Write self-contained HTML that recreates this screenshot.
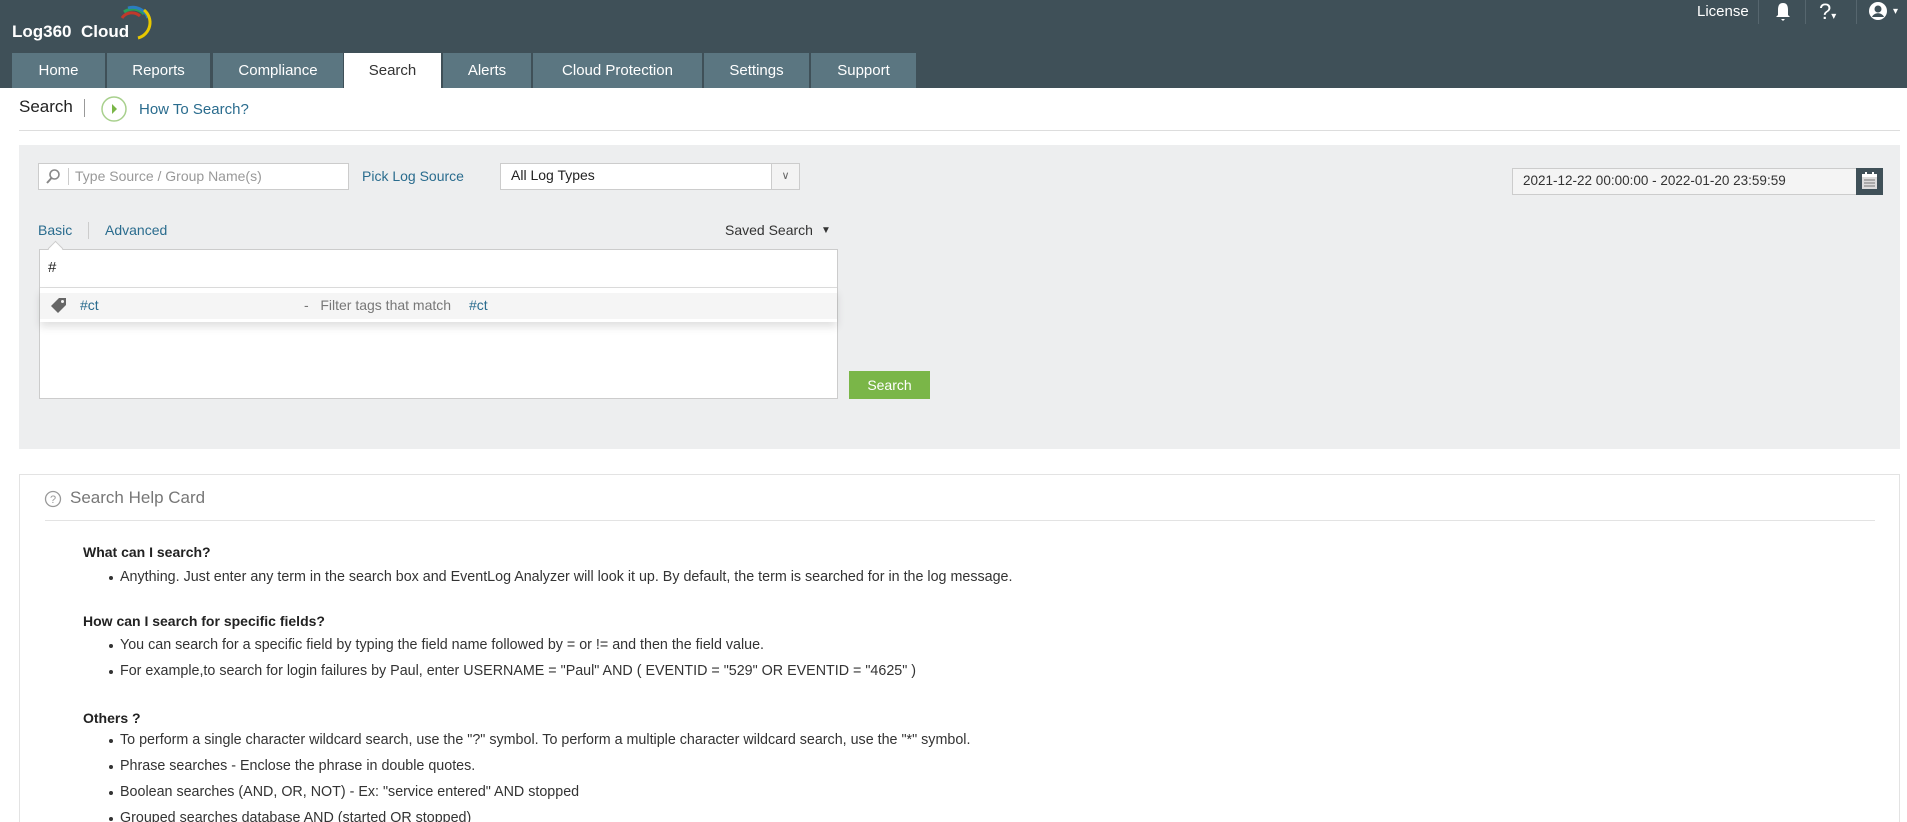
<!DOCTYPE html>
<html><head><meta charset="utf-8"><style>
*{margin:0;padding:0;box-sizing:border-box}
html,body{width:1907px;height:822px;overflow:hidden}
body{background:#fff;font-family:"Liberation Sans",sans-serif;position:relative;color:#333}
.a{position:absolute;white-space:nowrap}
#hdr{left:0;top:0;width:1907px;height:88px;background:#3f5058}
.tab{position:absolute;top:53px;height:35px;background:#5b7681;color:#fff;font-size:15px;text-align:center;line-height:35px}
.tab.on{background:#fff;color:#333}
.lnk{color:#2a6c8e}
.bul{font-size:14.3px;color:#333}
.bul:before{content:"";position:absolute;left:-11px;top:7px;width:4px;height:4px;border-radius:50%;background:#333}
h4{font-size:14px;font-weight:bold;color:#222}
</style></head><body>
<div id="hdr" class="a"></div>
<div class="a" style="left:12px;top:22px;color:#fff;font-size:17px;font-weight:bold">Log360&nbsp;&nbsp;Cloud</div>
<svg class="a" style="left:114px;top:4px" width="40" height="38" viewBox="0 0 40 38"><path d="M8 14 A12 12 0 0 1 26 12" stroke="#c0392b" stroke-width="3" fill="none"/><path d="M10 8 A15 15 0 0 1 30 10" stroke="#2a9d5c" stroke-width="3" fill="none"/><path d="M14 4 A16 16 0 0 1 34 14" stroke="#2a7dc0" stroke-width="3" fill="none"/><path d="M30 6 A16 16 0 0 1 24 34" stroke="#e8c800" stroke-width="3" fill="none"/></svg>
<div class="tab" style="left:12px;width:93px">Home</div>
<div class="tab" style="left:107px;width:103px">Reports</div>
<div class="tab" style="left:213px;width:130px">Compliance</div>
<div class="tab on" style="left:344px;width:97px">Search</div>
<div class="tab" style="left:443px;width:88px">Alerts</div>
<div class="tab" style="left:533px;width:169px">Cloud Protection</div>
<div class="tab" style="left:704px;width:105px">Settings</div>
<div class="tab" style="left:811px;width:105px">Support</div>
<div class="a" style="left:1697px;top:3px;color:#fff;font-size:15px">License</div>
<div class="a" style="left:1758px;top:0;width:1px;height:24px;background:#56666e"></div>
<svg class="a" style="left:1775px;top:2px" width="16" height="20" viewBox="0 0 16 20"><path d="M8 1 C4 1 3 4 3 8 L3 13 L1 15 L15 15 L13 13 L13 8 C13 4 12 1 8 1Z M6 17 L10 17 L8 19Z" fill="#fff"/></svg>
<div class="a" style="left:1805px;top:0;width:1px;height:24px;background:#56666e"></div>
<div class="a" style="left:1819px;top:-1px;color:#fff;font-size:22px">?<span style="font-size:10px">▾</span></div>
<div class="a" style="left:1856px;top:0;width:1px;height:24px;background:#56666e"></div>
<svg class="a" style="left:1868px;top:1px" width="20" height="20" viewBox="0 0 20 20"><circle cx="10" cy="10" r="9" fill="#fff"/><circle cx="10" cy="8" r="3.5" fill="#3f5058"/><path d="M4 16 C6 11 14 11 16 16Z" fill="#3f5058"/></svg>
<div class="a" style="left:1893px;top:6px;color:#fff;font-size:10px">▾</div>

<div class="a" style="left:19px;top:97px;font-size:17px;color:#222">Search</div>
<div class="a" style="left:84px;top:99px;width:1px;height:18px;background:#999"></div>
<svg class="a" style="left:100px;top:95px" width="28" height="28" viewBox="0 0 28 28"><circle cx="14" cy="14" r="12" fill="none" stroke="#a8d08d" stroke-width="1.5"/><path d="M12 9 L17 14 L12 19Z" fill="#7ab648"/></svg>
<div class="a lnk" style="left:139px;top:101px;font-size:15px">How To Search?</div>
<div class="a" style="left:19px;top:130px;width:1881px;height:1px;background:#ddd"></div>

<div class="a" style="left:19px;top:145px;width:1881px;height:304px;background:#edeeef"></div>
<div class="a" style="left:38px;top:163px;width:311px;height:27px;background:#fff;border:1px solid #ccc"></div>
<svg class="a" style="left:45px;top:168px" width="16" height="17" viewBox="0 0 16 17"><circle cx="9.5" cy="6.5" r="4.5" fill="none" stroke="#888" stroke-width="1.6"/><path d="M6.5 10 L2 15" stroke="#888" stroke-width="2"/></svg>
<div class="a" style="left:68px;top:168px;width:1px;height:17px;background:#ccc"></div>
<div class="a" style="left:75px;top:168px;font-size:14px;color:#999">Type Source / Group Name(s)</div>
<div class="a lnk" style="left:362px;top:168px;font-size:14px">Pick Log Source</div>
<div class="a" style="left:500px;top:163px;width:300px;height:27px;background:#fff;border:1px solid #ccc"></div>
<div class="a" style="left:771px;top:164px;width:28px;height:25px;background:#f3f3f3;border-left:1px solid #ccc;color:#666;font-size:11px;text-align:center;line-height:25px">&#x2228;</div>
<div class="a" style="left:511px;top:167px;font-size:14px;color:#222">All Log Types</div>
<div class="a" style="left:1512px;top:168px;width:345px;height:27px;background:#f4f4f4;border:1px solid #ccc"></div>
<div class="a" style="left:1523px;top:173px;font-size:13.5px;color:#333">2021-12-22 00:00:00 - 2022-01-20 23:59:59</div>
<div class="a" style="left:1856px;top:168px;width:27px;height:27px;background:#3f5058"></div>
<svg class="a" style="left:1861px;top:171px" width="17" height="19" viewBox="0 0 17 19"><rect x="1" y="3" width="15" height="15" fill="#ddd"/><rect x="1" y="3" width="15" height="3" fill="#fff"/><rect x="4" y="1" width="2" height="4" fill="#fff"/><rect x="11" y="1" width="2" height="4" fill="#fff"/><path d="M3 9h11M3 12h11M3 15h11" stroke="#777" stroke-width="1"/></svg>

<div class="a lnk" style="left:38px;top:222px;font-size:14px">Basic</div>
<div class="a" style="left:88px;top:222px;width:1px;height:17px;background:#ccc"></div>
<div class="a lnk" style="left:105px;top:222px;font-size:14px">Advanced</div>
<div class="a" style="left:725px;top:222px;font-size:14px;color:#333">Saved Search</div>
<div class="a" style="left:821px;top:225px;font-size:10px;color:#333">▼</div>
<div class="a" style="left:39px;top:249px;width:799px;height:150px;background:#fff;border:1px solid #ccc"></div>
<div class="a" style="left:50px;top:243px;width:11px;height:11px;background:#fff;border-left:1px solid #ccc;border-top:1px solid #ccc;transform:rotate(45deg)"></div>
<div class="a" style="left:48px;top:259px;font-size:15px;color:#222">#</div>
<div class="a" style="left:40px;top:287px;width:797px;height:1px;background:#ddd"></div>
<div class="a" style="left:40px;top:288px;width:797px;height:34px;background:#fff;box-shadow:0 5px 8px rgba(0,0,0,0.12)"></div>
<div class="a" style="left:40px;top:293px;width:797px;height:26px;background:#f5f5f5"></div>
<svg class="a" style="left:50px;top:297px" width="17" height="17" viewBox="0 0 17 17"><path d="M9 1 L16 1 L16 8 L8 16 L1 9Z" fill="#666"/><circle cx="12.5" cy="4.5" r="1.5" fill="#f5f5f5"/></svg>
<div class="a lnk" style="left:80px;top:297px;font-size:14px">#ct</div>
<div class="a" style="left:304px;top:297px;font-size:14px;color:#777">-&nbsp;&nbsp;&nbsp;Filter tags that match</div>
<div class="a lnk" style="left:469px;top:297px;font-size:14px">#ct</div>
<div class="a" style="left:849px;top:371px;width:81px;height:28px;background:#7ab648;color:#fff;font-size:14px;text-align:center;line-height:28px">Search</div>

<div class="a" style="left:19px;top:474px;width:1881px;height:348px;border:1px solid #e3e3e3;border-bottom:none"></div>
<svg class="a" style="left:44px;top:490px" width="18" height="18" viewBox="0 0 18 18"><circle cx="9" cy="9" r="7.5" fill="none" stroke="#999" stroke-width="1.3"/><text x="9" y="13" font-size="11" text-anchor="middle" fill="#999" font-family="Liberation Sans">?</text></svg>
<div class="a" style="left:70px;top:488px;font-size:17px;color:#777">Search Help Card</div>
<div class="a" style="left:45px;top:520px;width:1830px;height:1px;background:#e3e3e3"></div>
<h4 class="a" style="left:83px;top:544px">What can I search?</h4>
<div class="a bul" style="left:120px;top:569px">Anything. Just enter any term in the search box and EventLog Analyzer will look it up. By default, the term is searched for in the log message.</div>
<h4 class="a" style="left:83px;top:613px">How can I search for specific fields?</h4>
<div class="a bul" style="left:120px;top:637px">You can search for a specific field by typing the field name followed by = or != and then the field value.</div>
<div class="a bul" style="left:120px;top:663px">For example,to search for login failures by Paul, enter USERNAME = "Paul" AND ( EVENTID = "529" OR EVENTID = "4625" )</div>
<h4 class="a" style="left:83px;top:710px">Others ?</h4>
<div class="a bul" style="left:120px;top:732px">To perform a single character wildcard search, use the "?" symbol. To perform a multiple character wildcard search, use the "*" symbol.</div>
<div class="a bul" style="left:120px;top:758px">Phrase searches - Enclose the phrase in double quotes.</div>
<div class="a bul" style="left:120px;top:784px">Boolean searches (AND, OR, NOT) - Ex: "service entered" AND stopped</div>
<div class="a bul" style="left:120px;top:810px">Grouped searches database AND (started OR stopped)</div>
</body></html>
